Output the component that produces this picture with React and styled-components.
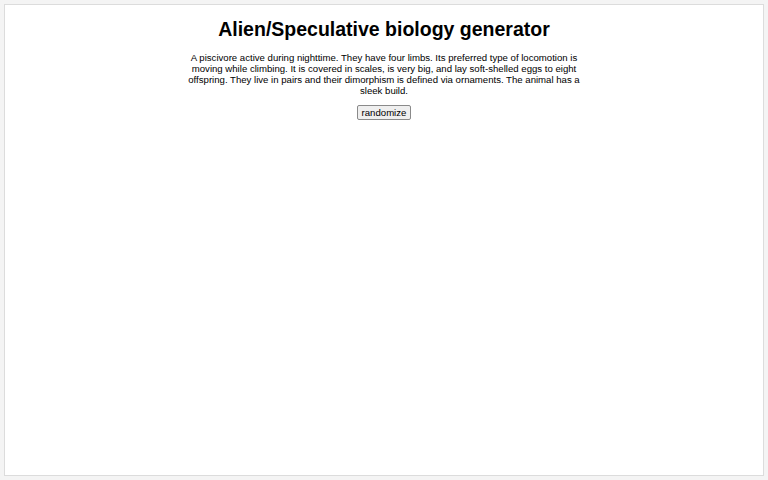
import React, { useState } from "react"
import styled, { createGlobalStyle } from "styled-components"

const GlobalStyle = createGlobalStyle`
  html, body {
    margin: 0;
    padding: 0;
    background: #f4f4f4;
  }
  body {
    padding: 4px;
    font-family: "Liberation Sans", Arial, sans-serif;
    color: #000;
  }
`

const Frame = styled.div`
  box-sizing: border-box;
  height: 472px;
  background: #fff;
  border: 1px solid #dcdcdc;
  display: flex;
  flex-direction: column;
  align-items: center;
  padding-top: 13px;
`

const Title = styled.h1`
  margin: 0;
  font-size: 19.5px;
  font-weight: 700;
  line-height: 22px;
`

const Description = styled.p`
  margin: 12px 0 0;
  width: 394px;
  font-size: 9.6px;
  line-height: 11px;
  text-align: center;
`

const Button = styled.button`
  margin-top: 9px;
  font-family: "Liberation Sans", Arial, sans-serif;
  font-size: 9.6px;
  padding: 1px 4px;
  height: 15px;
  line-height: 11px;
  background: #efefef;
  border: 1px solid #8a8a8a;
  border-radius: 2px;
  color: #000;
`

const animal =
  "A piscivore active during nighttime. They have four limbs. Its preferred type of locomotion is moving while climbing. It is covered in scales, is very big, and lay soft-shelled eggs to eight offspring. They live in pairs and their dimorphism is defined via ornaments. The animal has a sleek build."

export default function App() {
  const [text] = useState(animal)

  return (
    <>
      <GlobalStyle />
      <Frame>
        <Title>Alien/Speculative biology generator</Title>
        <Description>{text}</Description>
        <Button>randomize</Button>
      </Frame>
    </>
  )
}
